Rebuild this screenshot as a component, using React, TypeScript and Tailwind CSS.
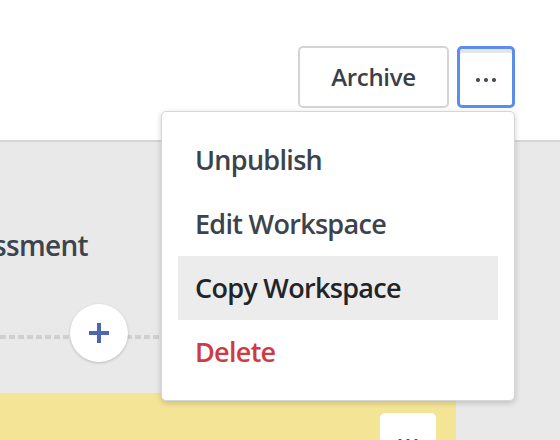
const font = { fontFamily: '"Open Sans", "Liberation Sans", sans-serif' }

function Dots({ className }: { className?: string }) {
  return (
    <div className={`flex gap-[4px] ${className ?? ""}`}>
      <span className="block w-[4px] h-[4px] rounded-full bg-[#3c4249]" />
      <span className="block w-[4px] h-[4px] rounded-full bg-[#3c4249]" />
      <span className="block w-[4px] h-[4px] rounded-full bg-[#3c4249]" />
    </div>
  )
}

const items = [
  { label: "Unpublish", cls: "text-[#3c434c]" },
  { label: "Edit Workspace", cls: "text-[#3c434c]" },
  { label: "Copy Workspace", cls: "text-[#222428] bg-[#ececec]" },
  { label: "Delete", cls: "text-[#cf3b40]" },
]

export default function App() {
  return (
    <div className="w-[560px] h-[440px] overflow-hidden bg-[#e9e9e9] flex flex-col" style={font}>
      <header className="h-[142px] shrink-0 bg-white border-b-2 border-[#d5d5d5] flex justify-end pr-[45px] pt-[46px]">
        <div className="flex gap-[8px] items-start h-[62px]">
          <button className="w-[151px] h-[62px] rounded-[5px] border-2 border-[#d4d4d4] bg-white text-[24px] tracking-[-0.3px] font-semibold text-[#3b4047]">
            Archive
          </button>
          <div className="relative">
            <button className="w-[58px] h-[62px] rounded-[5px] border-[3px] border-[#5b8def] bg-white flex items-center justify-center pt-[6px] shadow-[inset_0_4px_0_#e6e6e6]">
              <Dots />
            </button>
            <div className="absolute right-0 top-full mt-[3px] w-[354px] z-10 bg-white rounded-[5px] border border-[#d6d6d6] shadow-[0_2px_6px_rgba(0,0,0,0.18)] px-[16px] py-[16px]">
              {items.map((it) => (
                <div
                  key={it.label}
                  className={`h-[64px] flex items-center pl-[17px] text-[27px] tracking-[-0.7px] font-semibold ${it.cls}`}
                >
                  {it.label}
                </div>
              ))}
            </div>
          </div>
        </div>
      </header>

      <div className="flex flex-1">
        <div className="w-[456px] shrink-0 flex flex-col overflow-hidden">
          <div className="pt-[83px] h-[123px] text-[28px] leading-[40px] tracking-[-0.7px] font-semibold text-[#3d444d] whitespace-nowrap -ml-[66px]">
            Assessment
          </div>
          <div className="mt-[39px] h-[58px] relative flex items-center">
            <div className="absolute left-0 right-0 top-[31px] h-[4px] bg-[repeating-linear-gradient(90deg,#d0d0d0_0_6px,transparent_6px_9px)]" />
            <button className="relative ml-[70px] w-[58px] h-[58px] rounded-full bg-white shadow-[0_1px_3px_rgba(0,0,0,0.2)] flex items-center justify-center">
              <svg width="20" height="20" viewBox="0 0 20 20" className="text-[#4e67b1]">
                <rect x="8" y="0" width="4" height="20" fill="currentColor" />
                <rect x="0" y="8" width="20" height="4" fill="currentColor" />
              </svg>
            </button>
          </div>
          <div className="mt-[31px] flex-1 bg-[#f4e496] flex justify-end pr-[20px] pt-[20px]">
            <div className="w-[56px] h-[40px] bg-white rounded-[5px] flex justify-center pt-[26px]">
              <Dots />
            </div>
          </div>
        </div>
        <div className="flex-1" />
      </div>
    </div>
  )
}
